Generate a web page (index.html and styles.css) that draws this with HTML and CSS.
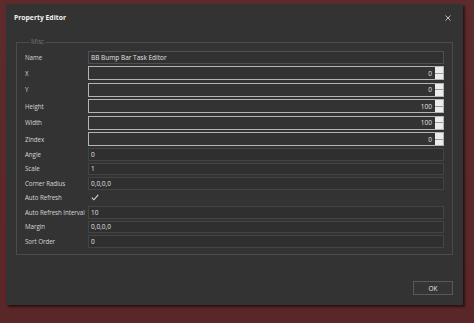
FILE: index.html
```html
<!DOCTYPE html>
<html>
<head>
<meta charset="utf-8">
<link rel="stylesheet" href="styles.css">
</head>
<body>
<div class="dialog">
  <div class="titlebar">
    <span class="title">Property Editor</span>
    <svg class="close" width="6" height="6" viewBox="0 0 6 6"><path d="M0.5 0.5L5.5 5.5M5.5 0.5L0.5 5.5" stroke="#cfcfcf" stroke-width="0.9"/></svg>
  </div>
  <fieldset class="group">
    <legend>Misc</legend>
    <div class="row r-name"><span class="label">Name</span><div class="text name">BB Bump Bar Task Editor</div></div>
    <div class="row r-num"><span class="label">X</span><div class="num"><span class="val">0</span><span class="spin"><i></i><i></i></span></div></div>
    <div class="row r-num"><span class="label">Y</span><div class="num"><span class="val">0</span><span class="spin"><i></i><i></i></span></div></div>
    <div class="row r-num"><span class="label">Height</span><div class="num"><span class="val">100</span><span class="spin"><i></i><i></i></span></div></div>
    <div class="row r-num"><span class="label">Width</span><div class="num"><span class="val">100</span><span class="spin"><i></i><i></i></span></div></div>
    <div class="row r-num last-num"><span class="label">Zindex</span><div class="num"><span class="val">0</span><span class="spin"><i></i><i></i></span></div></div>
    <div class="row r-txt"><span class="label">Angle</span><div class="text">0</div></div>
    <div class="row r-txt"><span class="label">Scale</span><div class="text">1</div></div>
    <div class="row r-txt"><span class="label">Corner Radius</span><div class="text">0,0,0,0</div></div>
    <div class="row r-txt"><span class="label">Auto Refresh</span><div class="check"><svg width="8" height="7" viewBox="0 0 8 7"><path d="M0.8 3.6L2.9 5.8L7.2 0.8" fill="none" stroke="#d8d8d8" stroke-width="1.1"/></svg></div></div>
    <div class="row r-txt"><span class="label">Auto Refresh Interval</span><div class="text">10</div></div>
    <div class="row r-txt"><span class="label">Margin</span><div class="text">0,0,0,0</div></div>
    <div class="row r-txt"><span class="label">Sort Order</span><div class="text">0</div></div>
  </fieldset>
  <div class="footer">
    <button class="ok">OK</button>
  </div>
</div>
</body>
</html>
```
FILE: styles.css
```css
html, body {
  margin: 0;
  padding: 0;
}
body {
  width: 474px;
  height: 323px;
  overflow: hidden;
  background: linear-gradient(#5e2b2c, #5a2627);
  font-family: "Open Sans", "Noto Sans", sans-serif;
  font-size: 6.5px;
  color: #dcdcdc;
}
.dialog {
  margin: 4px 0 0 6px;
  width: 457px;
  height: 301px;
  background: #333333;
  box-shadow: 2px 2px 2px rgba(0, 0, 0, 0.55);
  display: flex;
  flex-direction: column;
  box-sizing: border-box;
}
.titlebar {
  height: 26px;
  padding: 0 12px 0 8px;
  display: flex;
  align-items: center;
  justify-content: space-between;
  flex: none;
}
.title {
  font-weight: 700;
  color: #f2f2f2;
  font-size: 6.8px;
}
.close {
  display: block;
  margin-top: 2px;
}
.group {
  margin: 8px 10px 0;
  padding: 5px 8px 6px 8px;
  border: 1px solid #4b4b4b;
  min-width: 0;
}
.group legend {
  padding: 0 1px;
  margin-left: 5px;
  color: #767676;
  font-size: 6.2px;
  line-height: 8px;
}
.row {
  display: flex;
  align-items: stretch;
}
.label {
  width: 63px;
  flex: none;
  display: flex;
  align-items: center;
  white-space: nowrap;
  color: #d6d6d6;
  font-size: 6.2px;
  letter-spacing: -0.05px;
}
.r-name {
  height: 13px;
  margin-bottom: 2px;
}
.r-num {
  height: 14px;
  margin-bottom: 2.5px;
}
.r-num.last-num {
  margin-bottom: 2px;
}
.r-txt {
  height: 12.5px;
  margin-bottom: 2px;
}
.r-txt:last-child {
  margin-bottom: 0;
}
.text {
  flex: 1;
  box-sizing: border-box;
  background: #2f2f2f;
  border: 1px solid #444444;
  display: flex;
  align-items: center;
  padding-left: 2px;
  color: #e2e2e2;
}
.text.name {
  border-color: #505050;
  background: #313131;
}
.num {
  flex: 1;
  box-sizing: border-box;
  border: 1px solid #b4b4b4;
  background: #333333;
  display: flex;
  align-items: stretch;
  justify-content: flex-end;
}
.val {
  display: flex;
  align-items: center;
  padding-right: 3px;
  color: #e2e2e2;
}
.spin {
  width: 8px;
  display: flex;
  flex-direction: column;
  gap: 1px;
  background: #9a9a9a;
}
.spin i {
  flex: 1;
  background: #ececec;
}
.check {
  flex: 1;
  display: flex;
  align-items: center;
  padding-left: 3px;
}
.check svg {
  display: block;
}
.footer {
  margin-top: auto;
  display: flex;
  justify-content: flex-end;
  padding: 0 10px 10px 0;
}
.ok {
  width: 40px;
  height: 14px;
  box-sizing: border-box;
  border: 1px solid #5a5a5a;
  background: #353535;
  color: #e6e6e6;
  font-family: "Open Sans", "Noto Sans", sans-serif;
  font-size: 6.5px;
  padding: 0;
}
```
